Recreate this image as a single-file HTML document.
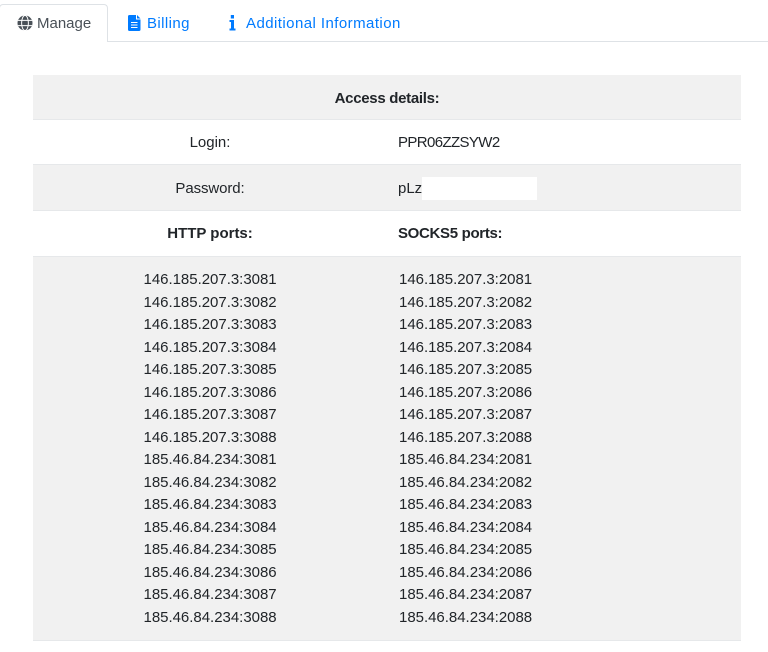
<!DOCTYPE html>
<html><head><meta charset="utf-8">
<style>
html,body{margin:0;padding:0;background:#fff}
body{width:768px;height:652px;position:relative;overflow:hidden;font-family:"Liberation Sans",sans-serif;font-size:15px;color:#212529}
.a{position:absolute;white-space:nowrap;line-height:22px}
.r{position:absolute;left:33px;width:708px;border-bottom:1px solid #e6e8ea;box-sizing:border-box}
.g{background:#f1f1f1}
.c{text-align:center}
b{font-weight:700}
.l{color:#007bff}
</style></head><body>
<div style="position:absolute;left:0;right:0;top:41px;height:1px;background:#dee2e6"></div>
<div style="position:absolute;left:-1px;top:4px;width:109px;height:38px;box-sizing:border-box;background:#fff;border:1px solid #dee2e6;border-bottom:none;border-radius:4px 4px 0 0"></div>
<svg style="position:absolute;left:17px;top:15px" width="16" height="16" viewBox="0 0 16 16"><circle cx="8" cy="8" r="7.5" fill="#495057"/><g fill="none" stroke="#fff" stroke-width="1"><ellipse cx="8" cy="8" rx="3.4" ry="7.5"/><path d="M1 5.4H15M1 10.6H15"/></g></svg>
<div class="a" style="left:37px;top:13px;color:#495057;letter-spacing:0">Manage</div>
<svg style="position:absolute;left:128px;top:15px" width="13" height="16" viewBox="0 0 13 16"><path fill="#007bff" d="M1.5 0H8V4.5H12.500V14.500Q12.500 16 11 16H1.500Q0 16 0 14.500V1.500Q0 0 1.500 0ZM9 0L12.500 3.500H9ZM3 7V8H9.500V7ZM3 9.500V10.500H9.500V9.500ZM3 12V13H9.500V12Z"/></svg>
<div class="a l" style="left:147px;top:13px;letter-spacing:.4px">Billing</div>
<svg style="position:absolute;left:229px;top:15px" width="7" height="16" viewBox="0 0 7 16"><path fill="#007bff" d="M1.800 0H5V3.500H1.800ZM.500 5H5V13.500H6.500V15.500H.500V13.500H2V7H.500Z"/></svg>
<div class="a l" style="left:246px;top:13px;letter-spacing:.44px">Additional Information</div>

<div class="r g" style="top:75px;height:45px"></div>
<div class="r" style="top:120px;height:45px"></div>
<div class="r g" style="top:165px;height:46px"></div>
<div class="r" style="top:211px;height:46px"></div>
<div class="r g" style="top:257px;height:384px"></div>

<div class="a c" style="left:33px;width:708px;top:88px;letter-spacing:-.3px"><b>Access details:</b></div>
<div class="a c" style="left:110px;width:200px;top:132px">Login:</div>
<div class="a" style="left:398px;top:132px;letter-spacing:-.62px">PPR06ZZSYW2</div>
<div class="a c" style="left:110px;width:200px;top:178px;letter-spacing:-.1px">Password:</div>
<div class="a" style="left:398px;top:178px">pLz</div>
<div style="position:absolute;left:422px;top:177px;width:115px;height:23px;background:#fff"></div>
<div class="a c" style="left:110px;width:200px;top:223px"><b>HTTP ports:</b></div>
<div class="a" style="left:398px;top:223px;letter-spacing:-.32px"><b>SOCKS5 ports:</b></div>

<div class="a" style="left:143.500px;top:269.400px;line-height:22.5px;white-space:pre-line;letter-spacing:-.02px">146.185.207.3:3081
146.185.207.3:3082
146.185.207.3:3083
146.185.207.3:3084
146.185.207.3:3085
146.185.207.3:3086
146.185.207.3:3087
146.185.207.3:3088
185.46.84.234:3081
185.46.84.234:3082
185.46.84.234:3083
185.46.84.234:3084
185.46.84.234:3085
185.46.84.234:3086
185.46.84.234:3087
185.46.84.234:3088</div>
<div class="a" style="left:399px;top:269.400px;line-height:22.5px;white-space:pre-line;letter-spacing:-.02px">146.185.207.3:2081
146.185.207.3:2082
146.185.207.3:2083
146.185.207.3:2084
146.185.207.3:2085
146.185.207.3:2086
146.185.207.3:2087
146.185.207.3:2088
185.46.84.234:2081
185.46.84.234:2082
185.46.84.234:2083
185.46.84.234:2084
185.46.84.234:2085
185.46.84.234:2086
185.46.84.234:2087
185.46.84.234:2088</div>
</body></html>
